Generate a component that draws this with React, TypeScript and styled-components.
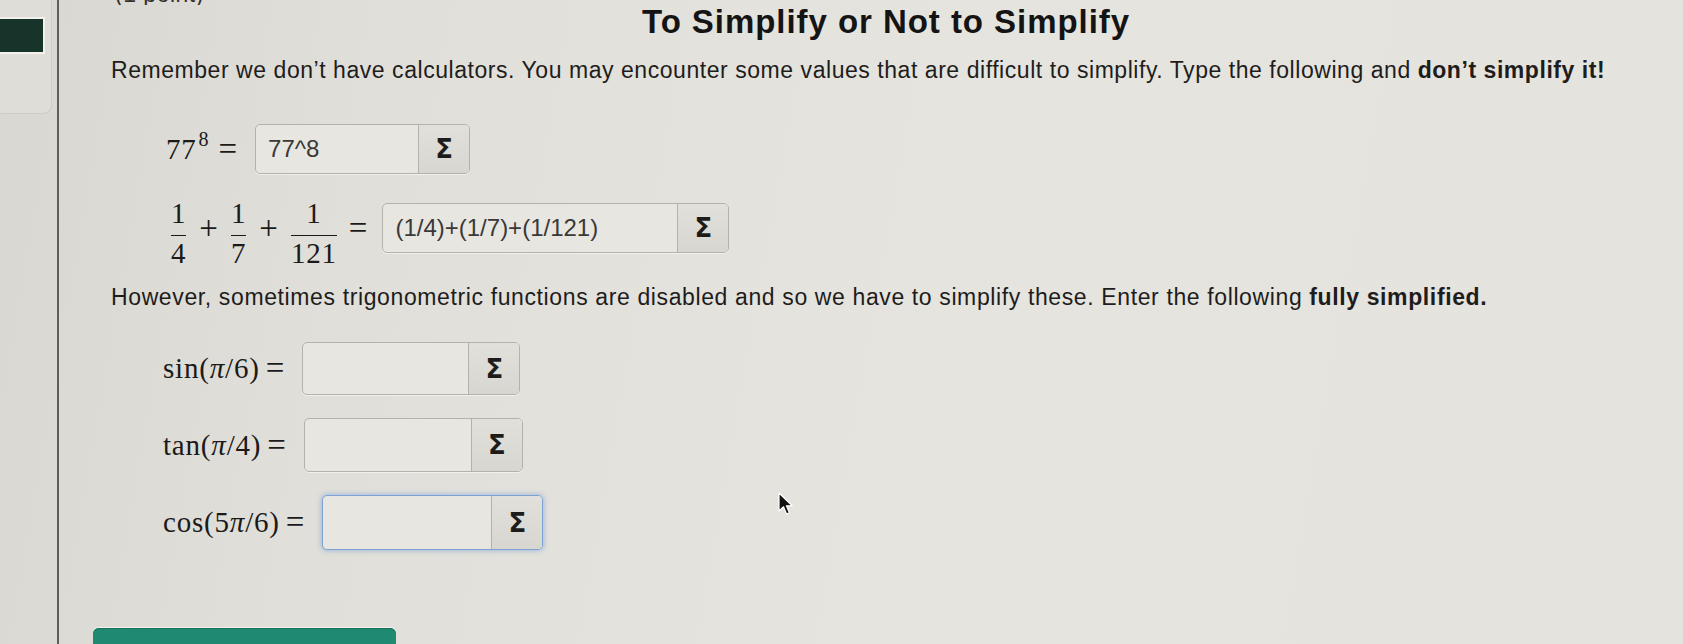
import React from "react";
import styled, { createGlobalStyle } from "styled-components";

const GlobalStyle = createGlobalStyle`
  html, body { margin: 0; padding: 0; }
  body {
    background: #e2e0da;
    font-family: "Liberation Sans", Arial, Helvetica, sans-serif;
    color: #1c1b1a;
  }
`;

const Page = styled.div`
  position: relative;
  display: flex;
  width: 1683px;
  height: 644px;
  overflow: hidden;
  background: linear-gradient(100deg, #d9d7d1 0%, #e1dfd9 22%, #e6e4df 55%, #e5e3de 100%);
`;

const Sidebar = styled.aside`
  flex: none;
  width: 57px;
  border-right: 2px solid #5f5e59;
  display: flex;
  flex-direction: column;
`;

const SidePanel = styled.div`
  height: 113px;
  margin-right: 6px;
  padding-top: 17px;
  box-sizing: border-box;
  background: #dfddd7;
  border-bottom-right-radius: 8px;
  box-shadow: 1px 1px 0 #cfcdc6;
`;

const SideBadge = styled.div`
  width: 45px;
  height: 37px;
  box-sizing: border-box;
  background: #17342a;
  border: 2px solid #f2f1ec;
  border-left: none;
`;

const Main = styled.main`
  flex: 1;
  min-width: 0;
  display: flex;
  flex-direction: column;
  padding: 0 22px 0 52px;
  overflow: hidden;
`;

const PointLabel = styled.div`
  flex: none;
  height: 5px;
  overflow: hidden;
  display: flex;
  align-items: flex-end;
  padding-left: 4px;
  font-size: 23px;
  letter-spacing: 0.5px;
  color: #333230;
`;

const PointText = styled.span`
  flex: none;
  line-height: 22px;
`;

const Title = styled.h1`
  flex: none;
  margin: 0;
  font-size: 33px;
  line-height: 34px;
  font-weight: 700;
  letter-spacing: 0.95px;
  text-align: center;
  color: #151414;
`;

const Para = styled.p<{ $mt: number; $ls: number }>`
  flex: none;
  margin: ${(p) => p.$mt}px 0 0;
  font-size: 23px;
  line-height: 26px;
  letter-spacing: ${(p) => p.$ls}px;
  color: #1e1d1c;
  white-space: nowrap;
`;

const Row = styled.div<{ $mt: number; $h: number; $indent: number }>`
  flex: none;
  display: flex;
  align-items: center;
  height: ${(p) => p.$h}px;
  margin-top: ${(p) => p.$mt}px;
  padding-left: ${(p) => p.$indent}px;
`;

const MathLabel = styled.div<{ $gap: number }>`
  display: flex;
  align-items: center;
  font-family: "Liberation Serif", "Times New Roman", serif;
  font-size: 29px;
  letter-spacing: 0.8px;
  color: #1b1a19;
  white-space: nowrap;
  margin-right: ${(p) => p.$gap}px;
`;

const Italic = styled.i`
  font-style: italic;
`;

const Sup = styled.sup`
  align-self: flex-start;
  font-size: 20px;
  line-height: 1;
  margin-top: -2px;
  margin-left: 2px;
`;

const Op = styled.span<{ $space: number }>`
  margin: 0 ${(p) => p.$space}px;
  font-size: 33px;
  letter-spacing: 0;
`;

const Fraction = styled.span`
  display: inline-flex;
  flex-direction: column;
  align-items: center;
  margin: 12px 2px 0;
  padding: 0 1px;
  line-height: 1.02;
`;

const FracBar = styled.span`
  align-self: stretch;
  border-top: 1.5px solid #1b1a19;
  margin: 6px 0 3px;
`;

const AnswerGroup = styled.div<{ $focused?: boolean }>`
  display: flex;
  height: 100%;
  box-sizing: border-box;
  border: 1px solid ${(p) => (p.$focused ? "#7ea3d3" : "#b4b2ab")};
  border-radius: 5px;
  background: #e8e6e1;
  box-shadow: ${(p) =>
    p.$focused ? "0 0 5px 1px rgba(90, 140, 215, 0.45)" : "0 1px 0 rgba(255,255,255,0.5)"};
`;

const AnswerInput = styled.input<{ $w: number }>`
  width: ${(p) => p.$w}px;
  box-sizing: border-box;
  border: none;
  outline: none;
  background: transparent;
  padding: 0 12px;
  font-family: "Liberation Sans", Arial, sans-serif;
  font-size: 24px;
  color: #3a3937;
  border-radius: 5px 0 0 5px;
`;

const SigmaButton = styled.button`
  width: 51px;
  flex: none;
  border: none;
  border-left: 1px solid #b4b2ab;
  border-radius: 0 4px 4px 0;
  background: linear-gradient(#e2e0db, #d8d6d0);
  font-family: "DejaVu Sans", "Liberation Sans", sans-serif;
  font-weight: 700;
  font-size: 26px;
  color: #1d1c1b;
  padding: 0;
  cursor: pointer;
`;

const SubmitButton = styled.button`
  flex: none;
  align-self: flex-start;
  margin: 78px 0 0 -18px;
  width: 303px;
  height: 44px;
  border: none;
  border-radius: 6px 6px 0 0;
  background: #1f8a71;
  box-shadow: 0 -1px 0 #f3f2ed, inset 0 1px 0 #17715c;
  color: #ffffff;
  font-size: 20px;
  padding-top: 40px;
`;

const Cursor = styled.svg`
  position: absolute;
  left: 778px;
  top: 492px;
  width: 16px;
  height: 24px;
`;

type AnswerProps = { w: number; value?: string; focused?: boolean };

function Answer({ w, value = "", focused }: AnswerProps) {
  return (
    <AnswerGroup $focused={focused}>
      <AnswerInput $w={w} value={value} readOnly />
      <SigmaButton type="button">Σ</SigmaButton>
    </AnswerGroup>
  );
}

export default function App() {
  return (
    <>
      <GlobalStyle />
      <Page>
        <Sidebar>
          <SidePanel>
            <SideBadge />
          </SidePanel>
        </Sidebar>
        <Main>
          <PointLabel>
            <PointText>(1 point)</PointText>
          </PointLabel>
          <Title>To Simplify or Not to Simplify</Title>
          <Para $mt={18} $ls={0.55}>
            Remember we don’t have calculators. You may encounter some values that are difficult to
            simplify. Type the following and <b>don’t simplify it!</b>
          </Para>

          <Row $mt={41} $h={50} $indent={55}>
            <MathLabel $gap={9}>
              77<Sup>8</Sup>
              <Op $space={9}>=</Op>
            </MathLabel>
            <Answer w={162} value="77^8" />
          </Row>

          <Row $mt={29} $h={50} $indent={57}>
            <MathLabel $gap={6}>
              <Fraction>
                <span>1</span>
                <FracBar />
                <span>4</span>
              </Fraction>
              <Op $space={10}>+</Op>
              <Fraction>
                <span>1</span>
                <FracBar />
                <span>7</span>
              </Fraction>
              <Op $space={10}>+</Op>
              <Fraction>
                <span>1</span>
                <FracBar />
                <span>121</span>
              </Fraction>
              <Op $space={9}>=</Op>
            </MathLabel>
            <Answer w={294} value="(1/4)+(1/7)+(1/121)" />
          </Row>

          <Para $mt={31} $ls={0.62}>
            However, sometimes trigonometric functions are disabled and so we have to simplify these.
            Enter the following <b>fully simplified.</b>
          </Para>

          <Row $mt={32} $h={53} $indent={52}>
            <MathLabel $gap={12}>
              sin(<Italic>π</Italic>/6)
              <Op $space={6}>=</Op>
            </MathLabel>
            <Answer w={165} />
          </Row>

          <Row $mt={23} $h={54} $indent={52}>
            <MathLabel $gap={12}>
              tan(<Italic>π</Italic>/4)
              <Op $space={6}>=</Op>
            </MathLabel>
            <Answer w={166} />
          </Row>

          <Row $mt={23} $h={55} $indent={52}>
            <MathLabel $gap={12}>
              cos(5<Italic>π</Italic>/6)
              <Op $space={6}>=</Op>
            </MathLabel>
            <Answer w={168} focused />
          </Row>

          <SubmitButton type="button">Submit Answers</SubmitButton>
        </Main>
        <Cursor viewBox="0 0 16 24">
          <path
            d="M1 1 L1 19 L5.5 14.8 L8.6 22 L11.4 20.8 L8.4 13.8 L14.2 13.8 Z"
            fill="#111"
            stroke="#fff"
            strokeWidth="1.2"
            strokeLinejoin="round"
          />
        </Cursor>
      </Page>
    </>
  );
}
